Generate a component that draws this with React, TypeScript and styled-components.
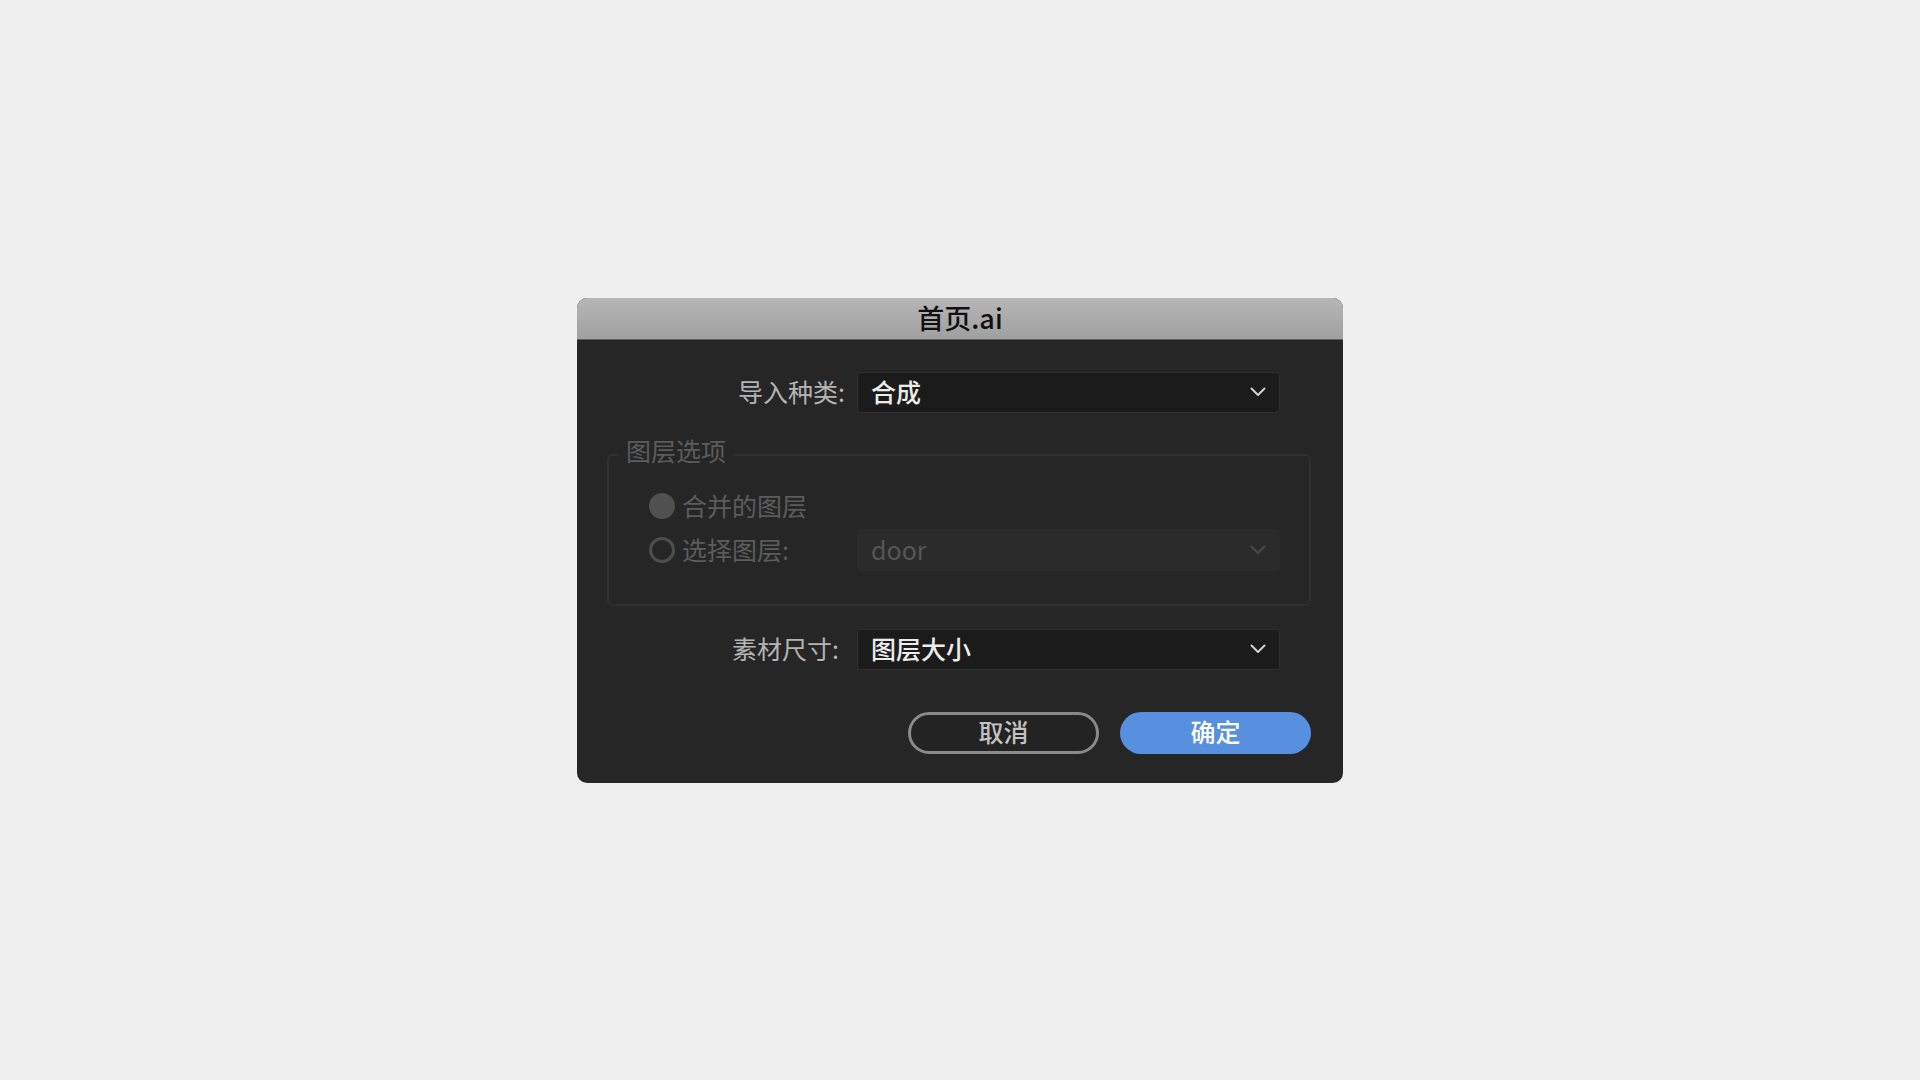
import styled, { createGlobalStyle } from "styled-components";

const GlobalStyle = createGlobalStyle`
  html, body {
    margin: 0;
    padding: 0;
    background: #f0f0f0;
  }
  body {
    font-family: "Noto Sans CJK SC", "Noto Sans", sans-serif;
  }
`;

const Chevron = ({ dim }: { dim?: boolean }) => (
  <svg width="16" height="10" viewBox="0 0 16 10">
    <polyline
      points="1.5,1.5 8,8 14.5,1.5"
      fill="none"
      stroke={dim ? "#4a4a4a" : "#d0d0d0"}
      strokeWidth="2"
      strokeLinecap="round"
      strokeLinejoin="round"
    />
  </svg>
);

const App = () => {
  return (
    <>
      <GlobalStyle />
      <Page>
        <Dialog>
          <TitleBar>首页.ai</TitleBar>
          <Body>
            <Row>
              <Label>导入种类:</Label>
              <Select>
                <span>合成</span>
                <Chevron />
              </Select>
            </Row>

            <Group>
              <Legend>图层选项</Legend>
              <RadioRow>
                <Radio checked />
                <RadioText>合并的图层</RadioText>
              </RadioRow>
              <RadioRow>
                <Radio />
                <RadioText>选择图层:</RadioText>
                <Select disabled>
                  <span>door</span>
                  <Chevron dim />
                </Select>
              </RadioRow>
            </Group>

            <Row>
              <Label shift={6}>素材尺寸:</Label>
              <Select>
                <span>图层大小</span>
                <Chevron />
              </Select>
            </Row>

            <Buttons>
              <Button>取消</Button>
              <Button primary>确定</Button>
            </Buttons>
          </Body>
        </Dialog>
      </Page>
    </>
  );
};

export default App;

const Page = styled.div`
  width: 100%;
  height: 100vh;
  display: flex;
  align-items: center;
  justify-content: center;
`;

const Dialog = styled.div`
  width: 766px;
  border-radius: 10px;
  overflow: hidden;
  background: #262626;
`;

const TitleBar = styled.div`
  height: 42px;
  background: linear-gradient(#b6b6b7, #a0a0a0);
  border-bottom: 1px solid #5e5e5e;
  display: flex;
  align-items: center;
  justify-content: center;
  color: #111;
  font-size: 27px;
  font-weight: 500;
  line-height: 1;
  padding-bottom: 2px;
  box-sizing: border-box;
`;

const Body = styled.div`
  padding: 32px 32px 29px 30px;
  display: flex;
  flex-direction: column;
`;

const Row = styled.div`
  display: flex;
  align-items: center;
`;

const Label = styled.div<{ shift?: number }>`
  width: ${(p) => 238 - (p.shift ?? 0)}px;
  margin-right: ${(p) => 12 + (p.shift ?? 0)}px;
  text-align: right;
  color: #b4b4b4;
  font-size: 25px;
  line-height: 30px;
  padding-bottom: 2px;
`;

const Select = styled.div<{ disabled?: boolean }>`
  width: 423px;
  height: ${(p) => (p.disabled ? 42 : 41)}px;
  box-sizing: border-box;
  border-radius: 4px;
  background: ${(p) => (p.disabled ? "#2b2b2b" : "#1b1b1b")};
  border: 1px solid ${(p) => (p.disabled ? "#2b2b2b" : "#303030")};
  display: flex;
  align-items: center;
  justify-content: space-between;
  padding: 0 13px 2px 13px;
  color: ${(p) => (p.disabled ? "#565656" : "#ececec")};
  font-size: 25px;
  font-weight: ${(p) => (p.disabled ? 400 : 500)};

  svg {
    margin-top: 2px;
  }
`;

const Group = styled.fieldset`
  margin: 27px 0 23px 0;
  padding: 20px 0 33px 0;
  border: 2px solid #303030;
  border-radius: 6px;
  display: flex;
  flex-direction: column;
  gap: 7px;
  min-width: 0;
`;

const Legend = styled.legend`
  margin-left: 9px;
  padding: 0 8px;
  color: #5c5c5c;
  font-size: 25px;
  line-height: 30px;
  position: relative;
  top: -5px;
`;

const RadioRow = styled.div`
  display: flex;
  align-items: center;
  min-height: 30px;
  padding-left: 40px;
`;

const Radio = styled.span<{ checked?: boolean }>`
  width: 26px;
  height: 26px;
  box-sizing: border-box;
  border-radius: 50%;
  flex-shrink: 0;
  background: ${(p) => (p.checked ? "#505050" : "transparent")};
  border: 3px solid ${(p) => (p.checked ? "#505050" : "#4e4e4e")};
  margin-right: 7px;
`;

const RadioText = styled.span`
  width: 175px;
  color: #5c5c5c;
  font-size: 25px;
  line-height: 30px;
  padding-bottom: 2px;
`;

const Buttons = styled.div`
  margin-top: 42px;
  display: flex;
  justify-content: flex-end;
  gap: 21px;
`;

const Button = styled.button<{ primary?: boolean }>`
  width: 191px;
  height: 42px;
  box-sizing: border-box;
  border-radius: 21px;
  font-family: "Noto Sans CJK SC", "Noto Sans", sans-serif;
  font-size: 25px;
  font-weight: 500;
  display: flex;
  align-items: center;
  justify-content: center;
  padding: 0 0 3px 0;
  cursor: pointer;
  background: ${(p) => (p.primary ? "#5890e0" : "#232323")};
  color: ${(p) => (p.primary ? "#ffffff" : "#c2c2c2")};
  border: ${(p) => (p.primary ? "none" : "3px solid #8a8a8a")};
`;
